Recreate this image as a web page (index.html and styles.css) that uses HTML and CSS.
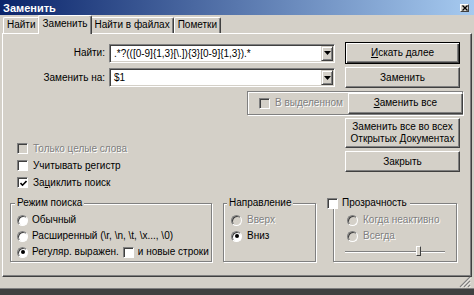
FILE: index.html
```html
<!DOCTYPE html>
<html lang="ru">
<head>
    <meta charset="UTF-8" />
    <title>Заменить</title>
    <link rel="stylesheet" href="styles.css">
</head>
<body>
<div class="window">
    <div class="titlebar">
        <span class="title">Заменить</span>
        <span class="close">
            <svg width="6" height="6" viewBox="0 0 6 6"><path d="M0.5 0.5 L5.5 5.5 M5.5 0.5 L0.5 5.5" stroke="#000" stroke-width="1.3"/></svg>
        </span>
    </div>

    <div class="tabs">
        <div class="tab">Найти</div>
        <div class="tab active">Заменить</div>
        <div class="tab">Найти в файлах</div>
        <div class="tab">Пометки</div>
    </div>

    <div class="panel">
        <div class="top">
            <label class="lbl">Найти:</label>
            <div class="combo">
                <span class="val">.*?(([0-9]{1,3}[\.]){3}[0-9]{1,3}).*</span>
                <span class="arrow"><svg width="7" height="4" viewBox="0 0 7 4"><path d="M0 0 H7 L3.5 4 Z" fill="#000"/></svg></span>
            </div>
            <button class="btn default"><u>И</u>скать далее</button>

            <label class="lbl">Заменить на:</label>
            <div class="combo">
                <span class="val">$1</span>
                <span class="arrow"><svg width="7" height="4" viewBox="0 0 7 4"><path d="M0 0 H7 L3.5 4 Z" fill="#000"/></svg></span>
            </div>
            <button class="btn">Заменить</button>

            <div class="sel">
                <span class="box disabled"></span>
                <span class="dim">В выделенном</span>
                <button class="btn"><u>З</u>аменить все</button>
            </div>

            <button class="btn tall">Заменить все во всех<br>Открытых <u>Д</u>окументах</button>

            <div class="checks">
                <div class="row"><span class="box disabled"></span><span class="dim">Только целые слова</span></div>
                <div class="row"><span class="box"></span><span>Учитывать <u>р</u>егистр</span></div>
                <div class="row">
                    <span class="box"><svg width="7" height="7" viewBox="0 0 7 7"><polyline points="0.5,3 2.5,5.2 6.5,1" fill="none" stroke="#000" stroke-width="1.6"/></svg></span>
                    <span>За<u>ц</u>иклить поиск</span>
                </div>
            </div>

            <button class="btn close-btn">Закрыть</button>
        </div>

        <div class="groups">
            <fieldset class="group mode">
                <legend>Режим поиска</legend>
                <div class="row"><span class="radio"></span><span>Обычный</span></div>
                <div class="row"><span class="radio"></span><span>Расширенный (\r, \n, \t, \x..., \0)</span></div>
                <div class="row">
                    <span class="radio on"></span><span>Регуляр. выражен.</span>
                    <span class="box inline"></span><span>и новые строки</span>
                </div>
            </fieldset>

            <fieldset class="group dir">
                <legend>Направление</legend>
                <div class="row"><span class="radio disabled"></span><span class="dim">Вверх</span></div>
                <div class="row"><span class="radio on"></span><span>Вниз</span></div>
            </fieldset>

            <fieldset class="group trans">
                <legend><span class="box"></span><span>Прозрачность</span></legend>
                <div class="row"><span class="radio disabled"></span><span class="dim">Когда неактивно</span></div>
                <div class="row"><span class="radio disabled"></span><span class="dim">Всегда</span></div>
                <div class="row">
                    <div class="slider"><span class="thumb"></span></div>
                </div>
            </fieldset>
        </div>
    </div>

    <div class="status">
        <svg class="grip" width="12" height="12" viewBox="0 0 12 12">
            <path d="M11 1 L1 11 M11 5 L5 11 M11 9 L9 11" stroke="#808080" stroke-width="1.2"/>
            <path d="M11.8 1.8 L1.8 11.8 M11.8 5.8 L5.8 11.8 M11.8 9.8 L9.8 11.8" stroke="#fff" stroke-width="0.8"/>
        </svg>
    </div>
</div>
</body>
</html>
```

FILE: styles.css
```css
* { margin: 0; padding: 0; box-sizing: border-box; }
body {
    width: 474px;
    height: 295px;
    overflow: hidden;
    background: #404040;
    font-family: "Liberation Sans", Arial, sans-serif;
    font-size: 10px;
    line-height: 12px;
    color: #000;
}
.window {
    height: 289px;
    background: #d4d0c8;
    border-bottom: 1px solid #808080;
    display: flex;
    flex-direction: column;
}

/* title bar */
.titlebar {
    height: 15px;
    flex: none;
    background: linear-gradient(to right, #0a246a, #a6caf0);
    color: #fff;
    font-weight: bold;
    font-size: 11px;
    display: flex;
    align-items: center;
    justify-content: space-between;
    padding: 0 5px 0 3px;
}
.close {
    width: 9px;
    height: 8px;
    background: #d4d0c8;
    border: 1px solid;
    border-color: #fff #404040 #404040 #fff;
    display: flex;
    align-items: center;
    justify-content: center;
}

/* tabs */
.tabs {
    height: 18px;
    flex: none;
    display: flex;
    align-items: flex-end;
    padding-left: 3px;
}
.tab {
    height: 16px;
    padding: 0 3px;
    line-height: 14px;
    white-space: nowrap;
    border: 1px solid #fff;
    border-bottom: none;
    border-right-color: #404040;
    border-radius: 2px 2px 0 0;
    box-shadow: inset -1px 0 #808080;
}
.tab.active {
    height: 19px;
    margin: 0 -2px -1px;
    padding: 0 4px;
    line-height: 15px;
    background: #d4d0c8;
    position: relative;
    z-index: 1;
}

/* panel */
.panel {
    flex: 1;
    margin: 0 2px;
    border: 1px solid;
    border-color: #fff #404040 #404040 #fff;
    box-shadow: inset -1px -1px #808080;
}
.top {
    display: grid;
    grid-template-columns: 106px 236px 118px;
    grid-template-rows: 22px 21px 24px 30px 21px;
    row-gap: 3px;
    padding-top: 8px;
}
.lbl {
    align-self: center;
    text-align: right;
    padding-right: 4px;
}
.combo {
    width: 226px;
    height: 19px;
    align-self: center;
    display: flex;
    background: #fff;
    border: 1px solid;
    border-color: #808080 #fff #fff #808080;
    box-shadow: inset 1px 1px #404040, inset -1px -1px #d4d0c8;
    padding: 1px;
}
.combo .val {
    flex: 1;
    padding-left: 3px;
    line-height: 15px;
    white-space: nowrap;
    overflow: hidden;
}
.combo .arrow {
    width: 12px;
    background: #d4d0c8;
    border: 1px solid;
    border-color: #d4d0c8 #404040 #404040 #d4d0c8;
    box-shadow: inset 1px 1px #fff, inset -1px -1px #808080;
    display: flex;
    align-items: center;
    justify-content: center;
}

.btn {
    width: 115px;
    font: inherit;
    color: #000;
    background: #d4d0c8;
    border: 1px solid;
    border-color: #fff #404040 #404040 #fff;
    box-shadow: inset -1px -1px #808080;
    justify-self: start;
}
.btn.default {
    border-color: #000;
    box-shadow: inset 1px 1px #fff, inset -1px -1px #404040, inset -2px -2px #808080;
}
.btn.tall { grid-column: 3; grid-row: 4; line-height: 12px; }
.close-btn { grid-column: 3; grid-row: 5; }

.sel {
    grid-column: 2 / 4;
    grid-row: 3;
    justify-self: end;
    width: 216px;
    display: flex;
    align-items: center;
    gap: 5px;
    white-space: nowrap;
    padding: 0 2px 0 11px;
    border: 1px solid #808080;
    box-shadow: inset 1px 1px #fff, 1px 1px #fff;
}
.sel .btn { margin-left: auto; height: 21px; flex: none; }

.checks {
    grid-column: 1 / 3;
    grid-row: 4 / 7;
    padding: 22px 0 0 14px;
}
.row {
    height: 17px;
    display: flex;
    align-items: center;
    gap: 5px;
    white-space: nowrap;
}

.box {
    width: 11px;
    height: 11px;
    flex: none;
    background: #fff;
    border: 1px solid;
    border-color: #808080 #fff #fff #808080;
    box-shadow: inset 1px 1px #404040;
    display: flex;
    align-items: center;
    justify-content: center;
    padding: 1px 0 0 1px;
}
.box.disabled { background: #d4d0c8; }
.box.inline { margin-left: 0; }

.radio {
    width: 11px;
    height: 11px;
    flex: none;
    border-radius: 50%;
    background: #fff;
    border: 1px solid;
    border-color: #808080 #fff #fff #808080;
    box-shadow: inset 1px 1px #404040;
    display: flex;
    align-items: center;
    justify-content: center;
}
.radio.disabled { background: #d4d0c8; }
.radio.on::after {
    content: "";
    width: 4px;
    height: 4px;
    border-radius: 50%;
    background: #000;
}

.dim {
    color: #808080;
    text-shadow: 1px 1px #fff;
}

/* bottom groups */
.groups {
    display: flex;
    padding: 6px 0 0 7px;
}
.group {
    height: 65px;
    border: 1px solid #808080;
    box-shadow: inset 1px 1px #fff, 1px 1px #fff;
    padding: 3px 4px 0 6px;
    min-width: 0;
}
.group legend {
    line-height: 12px;
    padding: 0 2px;
    margin-left: -2px;
    background: #d4d0c8;
}
.group .row { height: 16px; }
.mode { width: 202px; }
.mode .row { gap: 4px; }
.dir { width: 93px; margin-left: 11px; padding-left: 7px; }
.dir legend { margin-left: -4px; }
.trans { width: 124px; margin-left: 17px; padding-left: 13px; }
.trans legend {
    margin-left: -20px;
    padding: 0 3px 0 0;
    display: flex;
    align-items: center;
    gap: 4px;
}

.slider {
    position: relative;
    width: 100px;
    height: 2px;
    margin-left: -2px;
    border-top: 1px solid #808080;
    border-bottom: 1px solid #fff;
}
.thumb {
    position: absolute;
    left: 71px;
    top: -6px;
    width: 5px;
    height: 10px;
    background: #d4d0c8;
    border: 1px solid;
    border-color: #fff #404040 #404040 #fff;
}

.status {
    height: 11px;
    flex: none;
    display: flex;
    justify-content: flex-end;
    align-items: flex-end;
    padding-right: 3px;
}
```
